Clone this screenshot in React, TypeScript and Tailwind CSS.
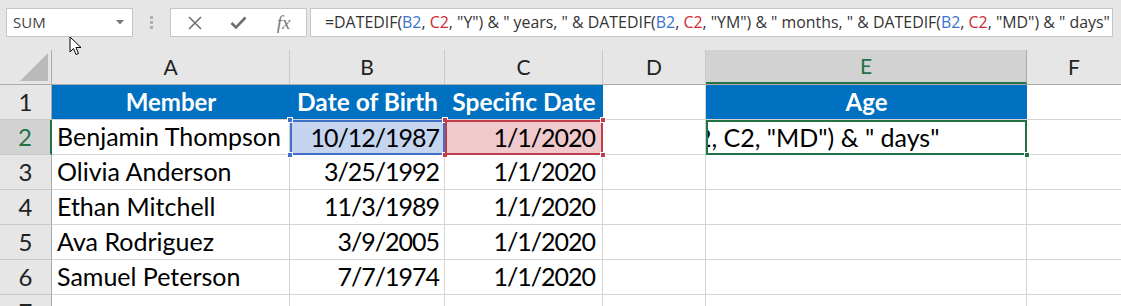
import React from "react";

const cols = [52, 238, 155, 158, 103, 321];

function Handle({ pos, color }: { pos: string; color: string }) {
  return <div className={`absolute w-[6px] h-[6px] border border-white ${pos}`} style={{ backgroundColor: color }} />;
}

type Row = { n: number; name: string; dob: string; sd: string };
const rows: Row[] = [
  { n: 3, name: "Olivia Anderson", dob: "3/25/1992", sd: "1/1/2020" },
  { n: 4, name: "Ethan Mitchell", dob: "11/3/1989", sd: "1/1/2020" },
  { n: 5, name: "Ava Rodriguez", dob: "3/9/2005", sd: "1/1/2020" },
  { n: 6, name: "Samuel Peterson", dob: "7/7/1974", sd: "1/1/2020" },
];

const cellFont = "font-['Lato',sans-serif] text-[25px] text-black";
const numFont = "font-['Lato',sans-serif] text-[25px] text-black tracking-[-1px]";

function RowHead({ n, selected }: { n: number; selected?: boolean }) {
  return (
    <div
      className={`w-[52px] shrink-0 flex items-center justify-center border-b border-[#c8c8c8] ${
        selected ? "bg-[#d2d2d2] text-[#217346] border-r-2 border-r-[#217346]" : "bg-[#e6e6e6] text-[#222] border-r border-r-[#ababab]"
      } font-['Lato',sans-serif] text-[24px]`}
    >
      {n}
    </div>
  );
}

export default function App() {
  return (
    <div className="relative w-[1121px] h-[306px] overflow-hidden bg-[#e6e6e6]">
      {/* Formula bar */}
      <div className="h-[50px] flex items-start pt-[8px]">
        <div className="ml-[6px] w-[127px] h-[29px] bg-white border border-[#c6c6c6] flex items-center justify-between pl-[6px] pr-[8px]">
          <span className="font-['Open_Sans',sans-serif] text-[15px] text-[#444]">SUM</span>
          <svg width="8" height="5" viewBox="0 0 8 5">
            <path d="M0 0 L8 0 L4 4.5 Z" fill="#777" />
          </svg>
        </div>
        <div className="w-[37px] h-[29px] flex flex-col items-center justify-center gap-[2px]">
          <div className="w-[3px] h-[3px] bg-[#b0b0b0]" />
          <div className="w-[3px] h-[3px] bg-[#b0b0b0]" />
          <div className="w-[3px] h-[3px] bg-[#b0b0b0]" />
        </div>
        <div className="w-[137px] h-[29px] bg-white border border-[#c6c6c6] flex items-center">
          <div className="w-[45px] flex justify-center pl-[3px]">
            <svg width="14" height="14" viewBox="0 0 14 14">
              <path d="M1 1 L13 13 M13 1 L1 13" stroke="#6f6f6f" strokeWidth="1.6" />
            </svg>
          </div>
          <div className="w-[45px] flex justify-center">
            <svg width="17" height="14" viewBox="0 0 17 14">
              <path d="M1.5 7 L6 11.5 L15.5 1.5" stroke="#6f6f6f" strokeWidth="2.6" fill="none" />
            </svg>
          </div>
          <div className="w-[45px] flex justify-center">
            <span className="font-['Liberation_Serif',serif] italic text-[19px] text-[#7a7a7a] leading-none">fx</span>
          </div>
        </div>
        <div className="ml-[3px] w-[803px] h-[29px] bg-white border border-[#c6c6c6] flex items-center pl-[14px] whitespace-nowrap font-['Open_Sans',sans-serif] text-[15.9px] text-[#333]">
          <span>
            =DATEDIF(<span className="text-[#3b73cf]">B2</span>, <span className="text-[#cc2936]">C2</span>, "Y") &amp; " years, " &amp; DATEDIF(
            <span className="text-[#3b73cf]">B2</span>, <span className="text-[#cc2936]">C2</span>, "YM") &amp; " months, " &amp; DATEDIF(
            <span className="text-[#3b73cf]">B2</span>, <span className="text-[#cc2936]">C2</span>, "MD") &amp; " days"
          </span>
        </div>
      </div>

      {/* Column headers */}
      <div className="flex h-[35px] bg-[#e6e6e6] border-b border-[#ababab]">
        <div className="w-[52px] shrink-0 border-r border-[#ababab] flex items-end justify-end pr-[3px] pb-[3px]">
          <svg width="28" height="28" viewBox="0 0 28 28">
            <path d="M28 0 L28 28 L0 28 Z" fill="#b9b9b9" />
          </svg>
        </div>
        {["A", "B", "C", "D"].map((l, i) => (
          <div
            key={l}
            style={{ width: cols[i + 1] }}
            className="shrink-0 border-r border-[#c8c8c8] flex items-center justify-center font-['Lato',sans-serif] text-[21px] text-[#222]"
          >
            {l}
          </div>
        ))}
        <div className="w-[321px] shrink-0 bg-[#d2d2d2] border-r border-[#ababab] border-b-2 border-b-[#217346] flex items-center justify-center font-['Lato',sans-serif] text-[21px] text-[#217346]">
          E
        </div>
        <div className="flex-1 flex items-center justify-center font-['Lato',sans-serif] text-[21px] text-[#222]">F</div>
      </div>

      {/* Row 1 */}
      <div className="flex h-[35px]">
        <RowHead n={1} />
        <div className="w-[238px] shrink-0 bg-[#0070c0] border-b border-[#d4d4d4] flex items-center justify-center font-['Lato',sans-serif] font-bold text-[24px] text-white">
          Member
        </div>
        <div className="w-[155px] shrink-0 bg-[#0070c0] border-b border-[#d4d4d4] flex items-center justify-center font-['Lato',sans-serif] font-bold text-[24.5px] text-white whitespace-nowrap">
          Date of Birth
        </div>
        <div className="w-[158px] shrink-0 bg-[#0070c0] border-b border-[#d4d4d4] flex items-center justify-center font-['Lato',sans-serif] font-bold text-[24.5px] text-white whitespace-nowrap">
          Specific Date
        </div>
        <div className="w-[103px] shrink-0 bg-white border-r border-b border-[#d4d4d4]" />
        <div className="w-[321px] shrink-0 bg-[#0070c0] border-b border-[#d4d4d4] flex items-center justify-center font-['Lato',sans-serif] font-bold text-[24px] text-white">
          Age
        </div>
        <div className="flex-1 bg-white border-b border-[#d4d4d4]" />
      </div>

      {/* Row 2 */}
      <div className="flex h-[35px]">
        <RowHead n={2} selected />
        <div className={`w-[238px] shrink-0 bg-white border-r border-b border-[#d4d4d4] flex items-center pl-[5px] whitespace-nowrap ${cellFont}`}>
          Benjamin Thompson
        </div>
        <div className="w-[155px] shrink-0 relative bg-white">
          <div className={`h-full bg-[#c6d5ef] border-2 border-[#3f6fc8] flex items-center justify-end pr-[4px] ${numFont}`}>10/12/1987</div>
          <Handle pos="-left-[3px] -top-[3px]" color="#3f6fc8" />
          <Handle pos="-left-[3px] -bottom-[3px]" color="#3f6fc8" />
          <Handle pos="-right-[3px] -top-[3px]" color="#c23b4a" />
          <Handle pos="-right-[3px] -bottom-[3px]" color="#c23b4a" />
        </div>
        <div className="w-[158px] shrink-0 relative bg-white">
          <div className={`h-full bg-[#f0c9cd] border-2 border-[#c23b4a] flex items-center justify-end pr-[6px] ${numFont}`}>1/1/2020</div>
          <Handle pos="-right-[3px] -top-[3px]" color="#c23b4a" />
          <Handle pos="-right-[3px] -bottom-[3px]" color="#c23b4a" />
        </div>
        <div className="w-[103px] shrink-0 bg-white border-r border-b border-[#d4d4d4]" />
        <div className="w-[321px] shrink-0 relative bg-white">
          <div className={`h-full border-2 border-[#217346] flex items-center overflow-hidden whitespace-nowrap ${cellFont}`}>
            <span className="ml-[-11px]">2, C2, "MD") &amp; " days"</span>
          </div>
          <div className="absolute -right-[3px] -bottom-[3px] w-[6px] h-[6px] bg-[#217346] border border-white" />
        </div>
        <div className="flex-1 bg-white border-b border-[#d4d4d4]" />
      </div>

      {rows.map((r) => (
        <div key={r.n} className="flex h-[35px]">
          <RowHead n={r.n} />
          <div className={`w-[238px] shrink-0 bg-white border-r border-b border-[#d4d4d4] flex items-center pl-[5px] whitespace-nowrap ${cellFont}`}>
            {r.name}
          </div>
          <div className={`w-[155px] shrink-0 bg-white border-r border-b border-[#d4d4d4] flex items-center justify-end pr-[5px] ${numFont}`}>
            {r.dob}
          </div>
          <div className={`w-[158px] shrink-0 bg-white border-r border-b border-[#d4d4d4] flex items-center justify-end pr-[7px] ${numFont}`}>
            {r.sd}
          </div>
          <div className="w-[103px] shrink-0 bg-white border-r border-b border-[#d4d4d4]" />
          <div className="w-[321px] shrink-0 bg-white border-r border-b border-[#d4d4d4]" />
          <div className="flex-1 bg-white border-b border-[#d4d4d4]" />
        </div>
      ))}

      {/* Row 7 */}
      <div className="flex h-[35px]">
        <RowHead n={7} />
        <div className="w-[238px] shrink-0 bg-white border-r border-[#d4d4d4]" />
        <div className="w-[155px] shrink-0 bg-white border-r border-[#d4d4d4]" />
        <div className="w-[158px] shrink-0 bg-white border-r border-[#d4d4d4]" />
        <div className="w-[103px] shrink-0 bg-white border-r border-[#d4d4d4]" />
        <div className="w-[321px] shrink-0 bg-white border-r border-[#d4d4d4]" />
        <div className="flex-1 bg-white" />
      </div>

      {/* Mouse cursor */}
      <svg className="absolute left-[69px] top-[36px]" width="14" height="21" viewBox="0 0 14 21">
        <path d="M1 1 L1 16 L4.5 12.5 L7 18.5 L9.5 17.5 L7 11.5 L12 11.5 Z" fill="white" stroke="black" strokeWidth="1" strokeLinejoin="round" />
      </svg>
    </div>
  );
}
